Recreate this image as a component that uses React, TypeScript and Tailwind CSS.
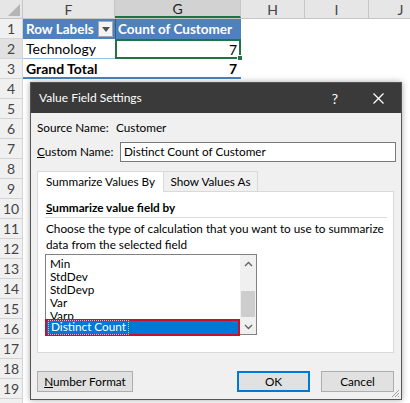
import React from "react";

const cols = [
  { key: "F", w: "w-[92px]" },
  { key: "G", w: "w-[126px]" },
  { key: "H", w: "w-[64px]" },
  { key: "I", w: "w-[64px]" },
  { key: "J", w: "w-[64px]" },
];

function RowHeader({ n, active }: { n: number; active?: boolean }) {
  return (
    <div
      className={`w-[23px] shrink-0 h-full flex items-center justify-center border-r border-b border-[#d4d4d4] text-[14px] text-[#444] ${
        active ? "bg-[#e1e1e1]" : "bg-[#f0f0f0]"
      }`}
    >
      {n}
    </div>
  );
}

function Chevron({ up }: { up?: boolean }) {
  return (
    <svg width="9" height="6" viewBox="0 0 9 6">
      <polyline
        points={up ? "1,5 4.5,1.5 8,5" : "1,1 4.5,4.5 8,1"}
        fill="none"
        stroke="#606060"
        strokeWidth="1.3"
      />
    </svg>
  );
}

export default function App() {
  const rows = Array.from({ length: 19 }, (_, i) => i + 1);
  return (
    <div className="relative w-[410px] h-[403px] overflow-hidden bg-white font-['Lato','Liberation_Sans',sans-serif] text-black">
      {/* Column header */}
      <div className="flex h-[19px] bg-[#e6e6e6] border-b border-[#c6c6c6]">
        <div className="w-[23px] shrink-0 h-full border-r border-[#c6c6c6] flex items-end justify-end pr-[2px] pb-[2px]">
          <svg width="12" height="12" viewBox="0 0 12 12">
            <polygon points="12,0 12,12 0,12" fill="#b5b5b5" />
          </svg>
        </div>
        {cols.map((c) => (
          <div
            key={c.key}
            className={`${c.w} shrink-0 h-full flex items-center justify-center text-[14px] border-r border-[#c6c6c6] ${
              c.key === "G"
                ? "bg-[#d2d2d2] border-b-2 border-b-[#217346] text-[#222]"
                : "text-[#444]"
            }`}
          >
            {c.key}
          </div>
        ))}
      </div>

      {rows.map((n) => (
        <div key={n} className="flex h-[20px]">
          <RowHeader n={n} active={n === 2} />
          {n === 1 && (
            <>
              <div className="w-[92px] shrink-0 h-full bg-[#4f81bd] flex items-center pl-[3px] pr-[2px] text-white font-bold text-[13.5px] whitespace-nowrap">
                <span className="flex-1">Row Labels</span>
                <div className="w-[15px] h-[16px] shrink-0 bg-[#f3f3f3] border border-[#a9a9a9] flex items-center justify-center">
                  <svg width="8" height="5" viewBox="0 0 8 5">
                    <polygon points="0,0 8,0 4,5" fill="#505050" />
                  </svg>
                </div>
              </div>
              <div className="w-[126px] shrink-0 h-full bg-[#4f81bd] border-l border-[#2f5f8f] flex items-center pl-[2px] text-white font-bold text-[13.5px] whitespace-nowrap">
                Count of Customer
              </div>
            </>
          )}
          {n === 2 && (
            <>
              <div className="w-[92px] shrink-0 h-full flex items-center pl-[3px] text-[14px] border-b border-[#9bc2e6]">
                Technology
              </div>
              <div className="relative w-[126px] shrink-0 h-full border-2 border-[#217346] flex items-center justify-end pr-[2px] text-[14px]">
                7
                <div className="absolute -right-[4px] -bottom-[4px] w-[6px] h-[6px] bg-[#217346] border border-white" />
              </div>
            </>
          )}
          {n === 3 && (
            <>
              <div className="w-[92px] shrink-0 h-full flex items-center pl-[3px] text-[14px] font-bold border-b-2 border-[#4f81bd]">
                Grand Total
              </div>
              <div className="w-[126px] shrink-0 h-full flex items-center justify-end pr-[4px] text-[14px] font-bold border-b-2 border-[#4f81bd]">
                7
              </div>
            </>
          )}
        </div>
      ))}
      <div className="flex h-[20px]">
        <div className="w-[23px] shrink-0 h-full bg-[#f0f0f0] border-r border-[#d4d4d4]" />
      </div>

      {/* Dialog */}
      <div className="absolute left-[30px] top-[82px] w-[372px] h-[318px] flex flex-col bg-[#f0f0f0] border border-[#555] shadow-[0_0_6px_rgba(0,0,0,0.35)] text-[11.75px]">
        <div className="h-[30px] shrink-0 bg-[#3a3a3a] flex items-center pl-[8px] text-white text-[12px]">
          <span className="flex-1">Value Field Settings</span>
          <span className="w-[40px] text-center text-[14px]">?</span>
          <span className="w-[46px] flex items-center justify-center">
            <svg width="11" height="11" viewBox="0 0 11 11">
              <line x1="0.5" y1="0.5" x2="10.5" y2="10.5" stroke="white" strokeWidth="1.2" />
              <line x1="10.5" y1="0.5" x2="0.5" y2="10.5" stroke="white" strokeWidth="1.2" />
            </svg>
          </span>
        </div>

        <div className="flex-1 flex flex-col pl-[6px] pr-[5px]">
          <div className="mt-[7px] h-[16px] flex items-center">
            <span className="w-[79px]">Source Name:</span>
            <span>Customer</span>
          </div>
          <div className="mt-[6px] h-[20px] flex items-center">
            <span className="w-[83px]">
              <span className="underline">C</span>ustom Name:
            </span>
            <div className="flex-1 h-full bg-white border border-[#7a7a7a] flex items-center pl-[3px]">
              Distinct Count of Customer
            </div>
          </div>

          <div className="mt-[9px] h-[20px] flex items-end">
            <div className="relative z-10 w-[127px] h-[21px] -mb-px bg-white border border-[#d9d9d9] border-b-0 flex items-center pl-[8px]">
              Summarize Values By
            </div>
            <div className="w-[94px] h-[20px] border border-l-0 border-b-0 border-[#d9d9d9] flex items-center justify-center pt-[1px]">
              Show Values As
            </div>
          </div>

          <div className="mr-[2px] h-[162px] bg-white border border-[#d9d9d9] flex flex-col pl-[7px]">
            <div className="mt-[8px] h-[16px] pl-[1px] flex items-center font-bold">
              <span>
                <span className="underline">S</span>ummarize value field by
              </span>
            </div>
            <div className="mt-[1px] mr-[6px] h-px bg-[#dcdcdc]" />
            <div className="mt-[3px] pl-[1px] leading-[16px] whitespace-nowrap">
              Choose the type of calculation that you want to use to summarize
              <br />
              data from the selected field
            </div>
            <div className="relative mt-[1px] w-[212px] h-[81px] border border-[#828282] flex">
              <div className="flex-1 flex flex-col pt-[2px] overflow-hidden">
                {["Min", "StdDev", "StdDevp", "Var", "Varp"].map((t) => (
                  <div key={t} className="h-[13px] shrink-0 leading-[13px] pl-[4px]">
                    {t}
                  </div>
                ))}
              </div>
              <div className="w-[16px] shrink-0 bg-[#f0f0f0] flex flex-col items-center">
                <div className="h-[17px] w-full flex items-center justify-center">
                  <Chevron up />
                </div>
                <div className="flex-1 w-full pt-[19px] pb-[5px] flex">
                  <div className="flex-1 bg-[#cdcdcd] mx-[1px]" />
                </div>
                <div className="h-[12px] w-full flex items-start justify-center pt-[2px]">
                  <Chevron />
                </div>
              </div>
              <div className="absolute -left-px top-[64px] w-[195px] h-[17px] border-2 border-[#c8102e] bg-[#0078d7] flex items-center pl-[2px]">
                <span className="h-[13px] leading-[12px] px-[2px] outline outline-1 outline-dotted outline-[#9fd0ff] text-white">
                  Distinct Count
                </span>
              </div>
            </div>
          </div>

          <div className="mt-[18px] h-[21px] flex">
            <div className="w-[96px] h-full bg-[#e1e1e1] border border-[#adadad] flex items-center justify-center">
              <span>
                <span className="underline">N</span>umber Format
              </span>
            </div>
            <div className="flex-1" />
            <div className="w-[73px] h-full bg-[#e1e1e1] border-2 border-[#0078d7] flex items-center justify-center">
              OK
            </div>
            <div className="w-[73px] ml-[11px] mr-[2px] h-full bg-[#e1e1e1] border border-[#adadad] flex items-center justify-center">
              Cancel
            </div>
          </div>
        </div>
        <div className="absolute right-[1px] bottom-[1px]">
          <svg width="10" height="10" viewBox="0 0 10 10">
            <line x1="9" y1="2" x2="2" y2="9" stroke="#a0a0a0" strokeWidth="1" />
            <line x1="9" y1="5" x2="5" y2="9" stroke="#a0a0a0" strokeWidth="1" />
            <line x1="9" y1="8" x2="8" y2="9" stroke="#a0a0a0" strokeWidth="1" />
          </svg>
        </div>
      </div>
    </div>
  );
}
